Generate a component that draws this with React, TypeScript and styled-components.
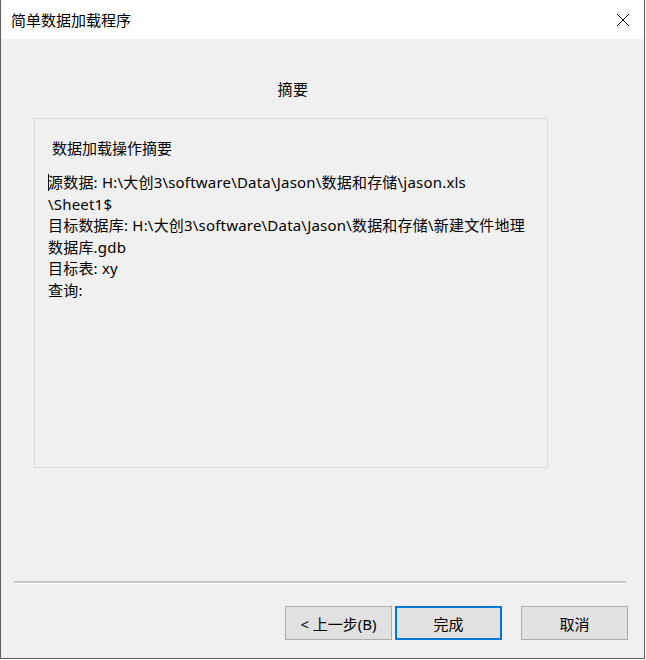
import styled, { createGlobalStyle } from 'styled-components';

const GlobalStyle = createGlobalStyle`
  html, body {
    margin: 0;
    padding: 0;
    background: #ffffff;
  }
  * {
    box-sizing: border-box;
  }
`

const fontStack = `"Noto Sans", "Noto Sans CJK SC", sans-serif`

const Window = styled.div`
  width: 645px;
  height: 659px;
  display: flex;
  flex-direction: column;
  border: 1px solid #5f5f5f;
  border-top: none;
  font-family: ${fontStack};
  color: #000;
  background: #f0f0f0;
`

const TitleBar = styled.header`
  height: 39px;
  flex: none;
  display: flex;
  align-items: center;
  justify-content: space-between;
  padding: 0 14px 0 10px;
  background: #ffffff;
  font-size: 15px;
`

const CloseButton = styled.span`
  display: flex;
  width: 14px;
  height: 14px;
`

const Content = styled.div`
  flex: 1;
  display: flex;
  flex-direction: column;
`

const Page = styled.section`
  width: 547px;
  padding-left: 33px;
  display: flex;
  flex-direction: column;
`

const Heading = styled.h2`
  margin: 41px 0 0;
  padding-left: 4px;
  height: 18px;
  line-height: 18px;
  font-size: 15px;
  font-weight: normal;
  letter-spacing: 0.5px;
  text-align: center;
`

const SummaryBox = styled.div`
  margin-top: 20px;
  height: 350px;
  border: 1px solid #dadada;
  padding: 19px 0 0 13px;
`

const Caption = styled.div`
  padding-left: 4px;
  height: 20px;
  line-height: 20px;
  font-size: 15px;
`

const SummaryText = styled.div`
  margin-top: 14px;
  font-size: 15px;
  line-height: 21.5px;
  letter-spacing: 0.2px;
`

const Line = styled.div`
  white-space: nowrap;
`

const Caret = styled.span`
  display: inline-block;
  width: 1px;
  height: 17px;
  margin-right: -1px;
  vertical-align: -3px;
  background: #000;
`

const Separator = styled.hr`
  margin: 113px 18px 0 13px;
  height: 3px;
  border: none;
  border-top: 2px solid #c6c6c6;
  border-bottom: 1px solid #ffffff;
`

const ButtonRow = styled.div`
  display: flex;
  justify-content: flex-end;
  margin-top: 22px;
  padding-right: 16px;
`

const Button = styled.button<{ $default?: boolean; $gap?: number }>`
  width: 107px;
  height: 34px;
  margin-left: ${(p) => p.$gap ?? 0}px;
  font-family: ${fontStack};
  font-size: 15px;
  color: #000;
  background: #e1e1e1;
  border: ${(p) => (p.$default ? '2px solid #0078d7' : '1px solid #adadad')};
  padding: 0;
`

const App: React.FC = () => {
  return (
    <>
      <GlobalStyle />
      <Window>
        <TitleBar>
          <span>简单数据加载程序</span>
          <CloseButton>
            <svg width="14" height="14" viewBox="0 0 14 14">
              <path d="M1 1 L13 13 M13 1 L1 13" stroke="#000" strokeWidth="1" fill="none" />
            </svg>
          </CloseButton>
        </TitleBar>
        <Content>
          <Page>
            <Heading>摘要</Heading>
            <SummaryBox>
              <Caption>数据加载操作摘要</Caption>
              <SummaryText>
                <Line><Caret />源数据: H:\大创3\software\Data\Jason\数据和存储\jason.xls</Line>
                <Line>\Sheet1$</Line>
                <Line>目标数据库: H:\大创3\software\Data\Jason\数据和存储\新建文件地理</Line>
                <Line>数据库.gdb</Line>
                <Line>目标表: xy</Line>
                <Line>查询:</Line>
              </SummaryText>
            </SummaryBox>
          </Page>
          <Separator />
          <ButtonRow>
            <Button>&lt; 上一步(B)</Button>
            <Button $default $gap={3}>完成</Button>
            <Button $gap={19}>取消</Button>
          </ButtonRow>
        </Content>
      </Window>
    </>
  );
}

export default App;
